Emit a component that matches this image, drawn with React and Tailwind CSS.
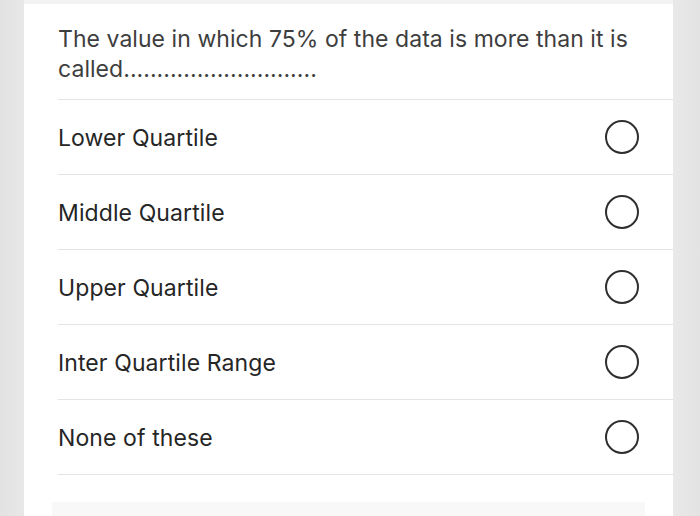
export default function App() {
  const opts = ["Lower Quartile", "Middle Quartile", "Upper Quartile", "Inter Quartile Range", "None of these"];
  return (
    <div className="w-[700px] h-[516px] overflow-hidden flex bg-[#e6e6e6]" style={{ fontFamily: 'Inter, "Noto Sans", sans-serif' }}>
      <div className="w-[24px] shrink-0 bg-gradient-to-r from-[#e2e2e2] to-[#e8e8e8]" />
      <div className="w-[649px] shrink-0 flex flex-col bg-white">
        <div className="h-[5px] bg-[#f3f3f3]" />
        <div className="pl-[34px] pt-[20px] pb-[15px] pr-[20px] text-[23px] leading-[30px] text-[#3e3e3e] tracking-[0.05px]">
          The value in which 75% of the data is more than it is called.............................
        </div>
        <div className="ml-[34px] flex flex-col">
          {opts.map((o) => (
            <div key={o} className="h-[75px] border-t border-[#e4e4e4] flex items-center justify-between pr-[34px]">
              <span className="text-[23px] text-[#262626] tracking-[0.1px] pt-[3px]">{o}</span>
              <span className="w-[34px] h-[34px] rounded-full border-2 border-[#2f2f2f]" />
            </div>
          ))}
          <div className="border-t border-[#e4e4e4]" />
        </div>
        <div className="mt-[27px] ml-[28px] w-[593px] h-[20px] bg-[#f8f8f8]" />
      </div>
      <div className="flex-1 bg-gradient-to-r from-[#e9e9e9] to-[#e3e3e3]" />
    </div>
  );
}
